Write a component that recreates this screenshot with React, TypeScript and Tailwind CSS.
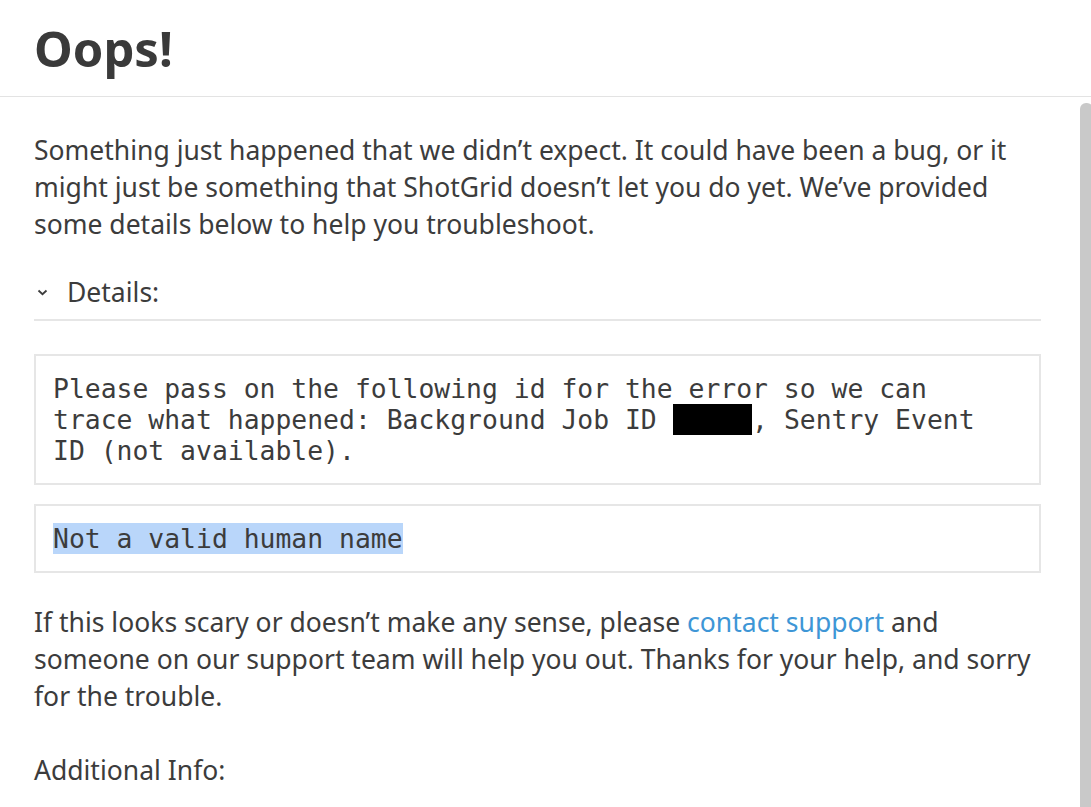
export default function App() {
  return (
    <div className="relative w-[1091px] h-[807px] overflow-hidden bg-white text-[#3c3c3c] font-['Noto_Sans',sans-serif]">
      {/* Header */}
      <div className="h-[97px] flex items-center px-[34px] border-b border-[#e3e3e3]">
        <h1 className="text-[49px] font-bold leading-none text-[#3a3a3a]">Oops!</h1>
      </div>

      {/* Body */}
      <div className="pl-[34px] pr-[50px] pt-[35px]">
        <p className="text-[26.5px] leading-[37px]">
          Something just happened that we didn’t expect. It could have been a bug, or it might just be
          something that ShotGrid doesn’t let you do yet. We’ve provided some details below to help you
          troubleshoot.
        </p>

        <div className="mt-[31px] pb-[8px] border-b-2 border-[#e6e6e6] flex items-center gap-[19px] pl-[3px]">
          <svg width="11" height="7" viewBox="0 0 11 7" className="text-[#3c3c3c]">
            <path d="M1.5 1.5 L5.5 5.2 L9.5 1.5" fill="none" stroke="currentColor" strokeWidth="1.8" />
          </svg>
          <span className="text-[26.5px] leading-[37px]">Details:</span>
        </div>

        <div className="mt-[33px] border-2 border-[#e6e6e6] pl-[17px] pr-[24px] py-[17px] font-['DejaVu_Sans_Mono',monospace] text-[26.4px] leading-[31px]">
          Please pass on the following id for the error so we can trace what happened: Background Job ID{" "}
          <span className="bg-black">{"\u00a0\u00a0\u00a0\u00a0\u00a0"}</span>, Sentry Event ID (not
          available).
        </div>

        <div className="mt-[19px] border-2 border-[#e6e6e6] pl-[17px] pr-[24px] py-[17px] font-['DejaVu_Sans_Mono',monospace] text-[26.4px] leading-[31px]">
          <span className="bg-[#b9d6fa]">Not a valid human name</span>
        </div>

        <p className="mt-[31px] text-[26.5px] leading-[37px]">
          If this looks scary or doesn’t make any sense, please{" "}
          <a className="text-[#3e96d6]">contact support</a> and someone on our support team will help you
          out. Thanks for your help, and sorry for the trouble.
        </p>

        <p className="mt-[37px] text-[26.5px] leading-[37px]">Additional Info:</p>
      </div>

      {/* Scrollbar thumb */}
      <div className="absolute right-[-2px] top-[103px] bottom-[-10px] w-[13px] rounded-t-[6px] bg-[#c9c9c9]" />
    </div>
  );
}
